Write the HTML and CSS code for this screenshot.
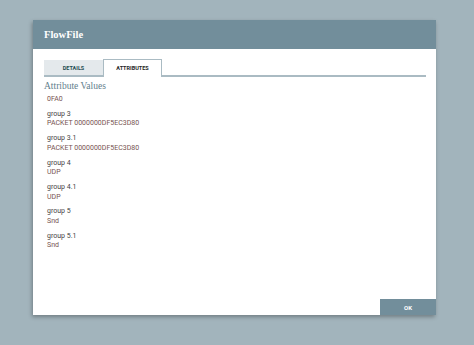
FILE: index.html
```html
<!DOCTYPE html>
<html>
<head>
<meta charset="utf-8">
<link rel="stylesheet" href="styles.css">
</head>
<body>
<div class="dialog">
  <div class="dialog-header">FlowFile</div>
  <div class="dialog-body">
    <div class="tabs">
      <div class="tab">DETAILS</div>
      <div class="tab active">ATTRIBUTES</div>
      <div class="tab-fill"></div>
    </div>
    <div class="section-title">Attribute Values</div>
    <div class="attr-list">
      <div class="attr"><div class="attr-value">0FA0</div></div>
      <div class="attr"><div class="attr-name">group 3</div><div class="attr-value">PACKET 0000000DF5EC3D80</div></div>
      <div class="attr"><div class="attr-name">group 3.1</div><div class="attr-value">PACKET 0000000DF5EC3D80</div></div>
      <div class="attr"><div class="attr-name">group 4</div><div class="attr-value">UDP</div></div>
      <div class="attr"><div class="attr-name">group 4.1</div><div class="attr-value">UDP</div></div>
      <div class="attr"><div class="attr-name">group 5</div><div class="attr-value">Snd</div></div>
      <div class="attr"><div class="attr-name">group 5.1</div><div class="attr-value">Snd</div></div>
    </div>
  </div>
  <div class="dialog-footer">
    <div class="button">OK</div>
  </div>
</div>
</body>
</html>
```

FILE: styles.css
```css
html, body {
  margin: 0;
  padding: 0;
}
body {
  background: #a2b4bc;
  width: 474px;
  height: 345px;
  overflow: hidden;
  padding-top: 20px;
  box-sizing: border-box;
  font-family: Roboto, "Liberation Sans", sans-serif;
}
.dialog {
  margin-left: 33px;
  width: 403px;
  height: 295px;
  background: #ffffff;
  display: flex;
  flex-direction: column;
  box-shadow: -1px 2px 4px rgba(0, 0, 0, 0.3);
}
.dialog-header {
  height: 29px;
  background: #728e9b;
  color: #ffffff;
  font-family: "Liberation Serif", serif;
  font-weight: bold;
  font-size: 10.5px;
  line-height: 29px;
  padding-left: 11px;
  flex: none;
}
.dialog-body {
  flex: 1;
  padding: 10px 10px 0 11px;
}
.tabs {
  display: flex;
  height: 18px;
  align-items: flex-end;
}
.tab {
  width: 59px;
  height: 17px;
  box-sizing: border-box;
  background: #e4e9ec;
  color: #1f4d52;
  font-size: 5.5px;
  font-weight: 700;
  display: flex;
  align-items: center;
  justify-content: center;
  border-bottom: 2px solid #aabbc3;
}
.tab.active {
  height: 18px;
  background: #ffffff;
  color: #262626;
  border: 1px solid #aabbc3;
  border-bottom: none;
  padding-bottom: 1px;
}
.tab-fill {
  flex: 1;
  height: 2px;
  background: #aabbc3;
}
.section-title {
  margin-top: 3px;
  font-family: "Liberation Serif", serif;
  font-size: 9.5px;
  line-height: 12px;
  color: #5f7e8c;
}
.attr-list {
  margin-top: 3px;
  padding-left: 3px;
  display: flex;
  flex-direction: column;
  gap: 5.3px;
}
.attr-name, .attr-value {
  font-size: 7px;
  line-height: 9.55px;
}
.attr-name {
  color: #444444;
}
.attr-value {
  color: #775351;
}
.dialog-footer {
  flex: none;
  height: 16px;
  display: flex;
  justify-content: flex-end;
}
.button {
  width: 56px;
  height: 16px;
  background: #728e9b;
  color: #ffffff;
  font-size: 6px;
  font-weight: 700;
  display: flex;
  align-items: center;
  justify-content: center;
}
```
